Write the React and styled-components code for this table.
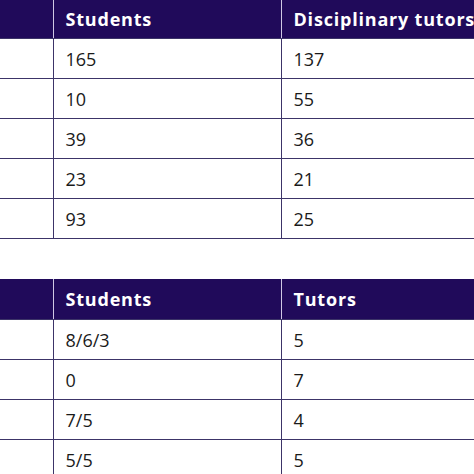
import React from "react";
import styled, { createGlobalStyle } from "styled-components";

const GlobalStyle = createGlobalStyle`
  html, body {
    margin: 0;
    padding: 0;
    background: #ffffff;
    overflow: hidden;
  }
  body {
    font-family: "Open Sans", "Noto Sans", "Liberation Sans", sans-serif;
  }
`;

const tables = [
  {
    head: ["", "Students", "Disciplinary tutors"],
    rows: [
      ["", "165", "137"],
      ["", "10", "55"],
      ["", "39", "36"],
      ["", "23", "21"],
      ["", "93", "25"],
    ],
  },
  {
    head: ["", "Students", "Tutors"],
    rows: [
      ["", "8/6/3", "5"],
      ["", "0", "7"],
      ["", "7/5", "4"],
      ["", "5/5", "5"],
    ],
  },
];

const App = () => {
  return (
    <>
      <GlobalStyle />
      <Page>
        {tables.map((t, i) => (
          <Table key={i}>
            <colgroup>
              <Col $w={53} />
              <Col $w={228} />
              <Col $w={240} />
            </colgroup>
            <thead>
              <tr>
                {t.head.map((h, j) => (
                  <HeadCell key={j} $first={j === 0} $top={i === 0}>
                    {h}
                  </HeadCell>
                ))}
              </tr>
            </thead>
            <tbody>
              {t.rows.map((r, k) => (
                <tr key={k}>
                  {r.map((c, j) => (
                    <Cell key={j} $first={j === 0}>
                      {c}
                    </Cell>
                  ))}
                </tr>
              ))}
            </tbody>
          </Table>
        ))}
      </Page>
    </>
  );
};

const Page = styled.div`
  width: 474px;
  height: 474px;
  overflow: hidden;
  display: flex;
  flex-direction: column;
  gap: 40px;
`;

const Table = styled.table`
  border-collapse: collapse;
  table-layout: fixed;
  width: 521px;
  flex-shrink: 0;
`;

const Col = styled.col`
  width: ${(p) => p.$w}px;
`;

const HeadCell = styled.th`
  height: ${(p) => (p.$top ? "38px" : "40px")};
  padding: 0 0 0 12px;
  background: #200a5a;
  color: #ffffff;
  font-size: 18px;
  font-weight: 700;
  letter-spacing: 0.8px;
  text-align: left;
  white-space: nowrap;
  overflow: hidden;
  border-left: ${(p) => (p.$first ? "none" : "1.5px solid #cfc8e4")};
  border-bottom: 1.5px solid #3c3468;
`;

const Cell = styled.td`
  height: 39px;
  padding: 0 0 0 12px;
  color: #1a1a1a;
  font-size: 18px;
  text-align: left;
  white-space: nowrap;
  border-left: ${(p) => (p.$first ? "none" : "1.5px solid #3c3468")};
  border-bottom: 1.5px solid #3c3468;
`;

export default App;
